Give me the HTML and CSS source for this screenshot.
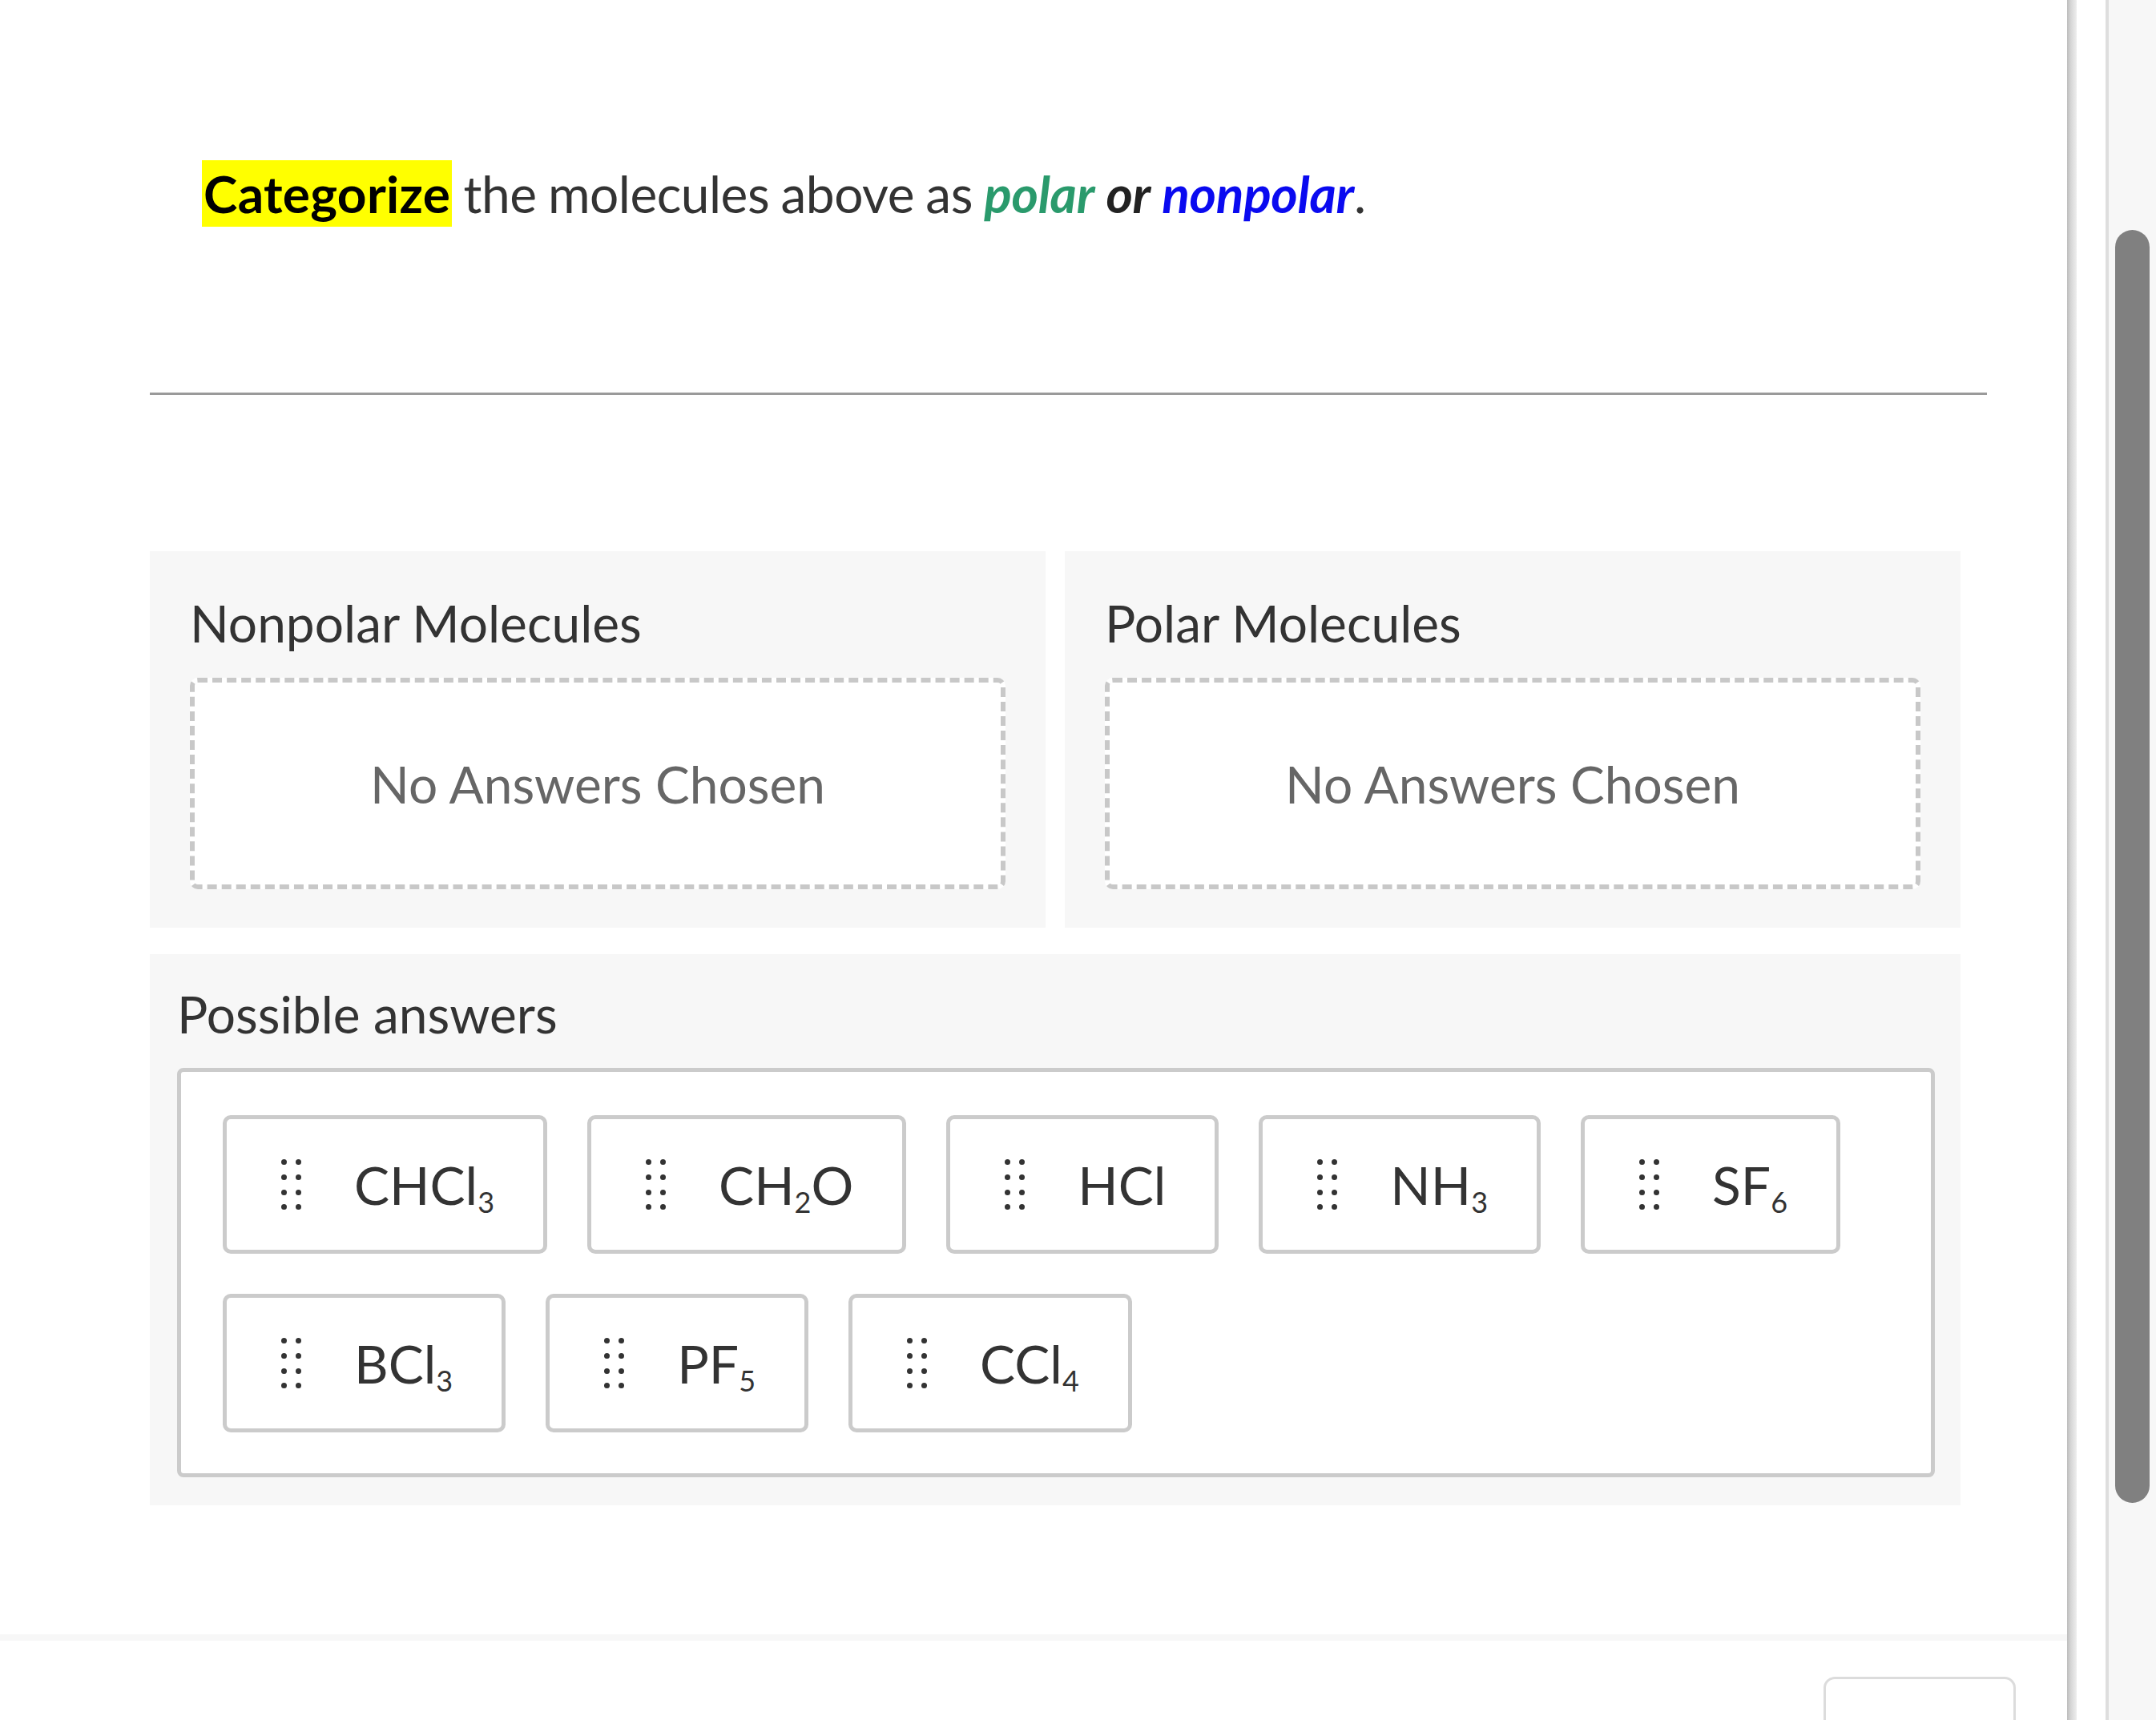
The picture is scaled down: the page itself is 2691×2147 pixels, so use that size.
FILE: index.html
```html
<!DOCTYPE html>
<html lang="en">
<head>
    <meta charset="UTF-8">
    <meta name="viewport" content="width=device-width, initial-scale=1.0">
    <link rel="stylesheet" href="styles.css">
    <title>Polar or nonpolar</title>
</head>
<body>
    <div class="screen">
        <div class="page">
            <p class="prompt">
                <span class="mark">Categorize</span> the molecules above as <em class="polar">polar</em> <em class="or">or</em> <em class="nonpolar">nonpolar</em>.
            </p>

            <hr class="rule">

            <div class="buckets">
                <div class="bucket">
                    <h2>Nonpolar Molecules</h2>
                    <div class="drop">No Answers Chosen</div>
                </div>
                <div class="bucket">
                    <h2>Polar Molecules</h2>
                    <div class="drop">No Answers Chosen</div>
                </div>
            </div>

            <div class="pool">
                <h2>Possible answers</h2>
                <div class="pool-box">
                    <div class="chip">
                        <svg class="grip" viewBox="0 0 25 63"><g fill="#333"><circle cx="3.5" cy="3.5" r="3.5"/><circle cx="21.5" cy="3.5" r="3.5"/><circle cx="3.5" cy="22.5" r="3.5"/><circle cx="21.5" cy="22.5" r="3.5"/><circle cx="3.5" cy="41.5" r="3.5"/><circle cx="21.5" cy="41.5" r="3.5"/><circle cx="3.5" cy="59.5" r="3.5"/><circle cx="21.5" cy="59.5" r="3.5"/></g></svg>
                        <span class="formula">CHCl<sub>3</sub></span>
                    </div>
                    <div class="chip">
                        <svg class="grip" viewBox="0 0 25 63"><g fill="#333"><circle cx="3.5" cy="3.5" r="3.5"/><circle cx="21.5" cy="3.5" r="3.5"/><circle cx="3.5" cy="22.5" r="3.5"/><circle cx="21.5" cy="22.5" r="3.5"/><circle cx="3.5" cy="41.5" r="3.5"/><circle cx="21.5" cy="41.5" r="3.5"/><circle cx="3.5" cy="59.5" r="3.5"/><circle cx="21.5" cy="59.5" r="3.5"/></g></svg>
                        <span class="formula">CH<sub>2</sub>O</span>
                    </div>
                    <div class="chip">
                        <svg class="grip" viewBox="0 0 25 63"><g fill="#333"><circle cx="3.5" cy="3.5" r="3.5"/><circle cx="21.5" cy="3.5" r="3.5"/><circle cx="3.5" cy="22.5" r="3.5"/><circle cx="21.5" cy="22.5" r="3.5"/><circle cx="3.5" cy="41.5" r="3.5"/><circle cx="21.5" cy="41.5" r="3.5"/><circle cx="3.5" cy="59.5" r="3.5"/><circle cx="21.5" cy="59.5" r="3.5"/></g></svg>
                        <span class="formula">HCl</span>
                    </div>
                    <div class="chip">
                        <svg class="grip" viewBox="0 0 25 63"><g fill="#333"><circle cx="3.5" cy="3.5" r="3.5"/><circle cx="21.5" cy="3.5" r="3.5"/><circle cx="3.5" cy="22.5" r="3.5"/><circle cx="21.5" cy="22.5" r="3.5"/><circle cx="3.5" cy="41.5" r="3.5"/><circle cx="21.5" cy="41.5" r="3.5"/><circle cx="3.5" cy="59.5" r="3.5"/><circle cx="21.5" cy="59.5" r="3.5"/></g></svg>
                        <span class="formula">NH<sub>3</sub></span>
                    </div>
                    <div class="chip">
                        <svg class="grip" viewBox="0 0 25 63"><g fill="#333"><circle cx="3.5" cy="3.5" r="3.5"/><circle cx="21.5" cy="3.5" r="3.5"/><circle cx="3.5" cy="22.5" r="3.5"/><circle cx="21.5" cy="22.5" r="3.5"/><circle cx="3.5" cy="41.5" r="3.5"/><circle cx="21.5" cy="41.5" r="3.5"/><circle cx="3.5" cy="59.5" r="3.5"/><circle cx="21.5" cy="59.5" r="3.5"/></g></svg>
                        <span class="formula">SF<sub>6</sub></span>
                    </div>
                    <div class="chip">
                        <svg class="grip" viewBox="0 0 25 63"><g fill="#333"><circle cx="3.5" cy="3.5" r="3.5"/><circle cx="21.5" cy="3.5" r="3.5"/><circle cx="3.5" cy="22.5" r="3.5"/><circle cx="21.5" cy="22.5" r="3.5"/><circle cx="3.5" cy="41.5" r="3.5"/><circle cx="21.5" cy="41.5" r="3.5"/><circle cx="3.5" cy="59.5" r="3.5"/><circle cx="21.5" cy="59.5" r="3.5"/></g></svg>
                        <span class="formula">BCl<sub>3</sub></span>
                    </div>
                    <div class="chip">
                        <svg class="grip" viewBox="0 0 25 63"><g fill="#333"><circle cx="3.5" cy="3.5" r="3.5"/><circle cx="21.5" cy="3.5" r="3.5"/><circle cx="3.5" cy="22.5" r="3.5"/><circle cx="21.5" cy="22.5" r="3.5"/><circle cx="3.5" cy="41.5" r="3.5"/><circle cx="21.5" cy="41.5" r="3.5"/><circle cx="3.5" cy="59.5" r="3.5"/><circle cx="21.5" cy="59.5" r="3.5"/></g></svg>
                        <span class="formula">PF<sub>5</sub></span>
                    </div>
                    <div class="chip">
                        <svg class="grip" viewBox="0 0 25 63"><g fill="#333"><circle cx="3.5" cy="3.5" r="3.5"/><circle cx="21.5" cy="3.5" r="3.5"/><circle cx="3.5" cy="22.5" r="3.5"/><circle cx="21.5" cy="22.5" r="3.5"/><circle cx="3.5" cy="41.5" r="3.5"/><circle cx="21.5" cy="41.5" r="3.5"/><circle cx="3.5" cy="59.5" r="3.5"/><circle cx="21.5" cy="59.5" r="3.5"/></g></svg>
                        <span class="formula">CCl<sub>4</sub></span>
                    </div>
                </div>
            </div>

            <div class="footer">
                <button class="submit">Submit</button>
            </div>
        </div>

        <div class="edge"></div>
        <div class="gutter"></div>
        <div class="track">
            <div class="thumb"></div>
        </div>
    </div>
</body>
</html>
```

FILE: styles.css
```css
body {
    margin: 0;
    overflow: hidden;
    font-family: Lato, 'Open Sans', sans-serif;
    color: #333;
    background: #fff;
}

.screen {
    display: flex;
    height: 2147px;
    overflow: hidden;
}

/* ____________________________________________________________________ */
.page {
    width: 2580px;
    flex: none;
}

.prompt {
    margin: 0;
    padding: 203px 0 0 252px;
    font-size: 64px;
    line-height: normal;
    letter-spacing: -0.5px;
    word-spacing: -1.5px;
    color: #333;
}

.mark {
    padding: 3px 2px;
    background-color: #ffff00;
    color: #000;
    font-weight: 700;
    letter-spacing: 0.3px;
}

.prompt em {
    font-weight: 700;
    font-style: italic;
    letter-spacing: -0.3px;
}

.polar {
    color: #2a9a6c;
}

.or {
    color: #222;
}

.nonpolar {
    color: #0a0af0;
}

.rule {
    display: block;
    border: 0;
    height: 3px;
    width: 2293px;
    background-color: #9a9a9a;
    margin: 210px 0 0 187px;
}

/* ____________________________________________________________________ */
.buckets {
    display: flex;
    gap: 24px;
    width: 2260px;
    margin: 195px 0 0 187px;
}

.bucket {
    flex: 1;
    background-color: #f7f7f7;
    padding: 51px 50px 48px;
}

.bucket h2,
.pool h2 {
    margin: 0;
    font-weight: 400;
    font-size: 64px;
    line-height: normal;
    color: #333;
}

.bucket h2 {
    margin-bottom: 30px;
}

.drop {
    height: 264px;
    box-sizing: border-box;
    border: 6px dashed #c8c8c8;
    border-radius: 10px;
    background-color: #fff;
    display: flex;
    align-items: center;
    justify-content: center;
    font-size: 64px;
    color: #666;
}

/* ____________________________________________________________________ */
.pool {
    width: 2260px;
    box-sizing: border-box;
    margin: 33px 0 0 187px;
    padding: 36px 32px 35px 34px;
    background-color: #f7f7f7;
}

.pool h2 {
    margin-bottom: 29px;
}

.pool-box {
    display: flex;
    flex-wrap: wrap;
    gap: 50px 50px;
    padding: 54px 52px 51px;
    border: 5px solid #cbcbcb;
    border-radius: 8px;
    background-color: #fff;
}

.chip {
    display: flex;
    align-items: center;
    height: 173px;
    box-sizing: border-box;
    padding: 0 61px 0 68px;
    border: 5px solid #cbcbcb;
    border-radius: 10px;
    background-color: #fff;
}

.grip {
    width: 25px;
    height: 63px;
    flex: none;
    margin-right: 66px;
}

.formula {
    font-size: 66px;
    line-height: 1;
    color: #333;
}

.formula sub {
    font-size: 36px;
    vertical-align: -10px;
    line-height: 0;
}

/* ____________________________________________________________________ */
.footer {
    margin-top: 161px;
    border-top: 8px solid #f7f7f7;
    display: flex;
    justify-content: flex-end;
    padding: 45px 64px 0 0;
}

.submit {
    width: 240px;
    height: 160px;
    padding: 48px 0 0;
    border: 3px solid #dcdcdc;
    border-radius: 14px;
    background-color: #fff;
    font-family: Lato, sans-serif;
    font-size: 60px;
    color: #555;
    text-align: center;
    vertical-align: top;
}

/* ____________________________________________________________________ */
.edge {
    width: 12px;
    flex: none;
    background: linear-gradient(to right, #bdbdbd, #d6d6d6 40%, #eeeeee);
}

.gutter {
    width: 36px;
    flex: none;
    border-right: 4px solid #dedede;
    background-color: #fff;
}

.track {
    width: 59px;
    flex: none;
    box-sizing: border-box;
    padding: 287px 8px 0;
    background-color: #f7f7f7;
}

.thumb {
    height: 1589px;
    border-radius: 22px;
    background-color: #808080;
}
```
